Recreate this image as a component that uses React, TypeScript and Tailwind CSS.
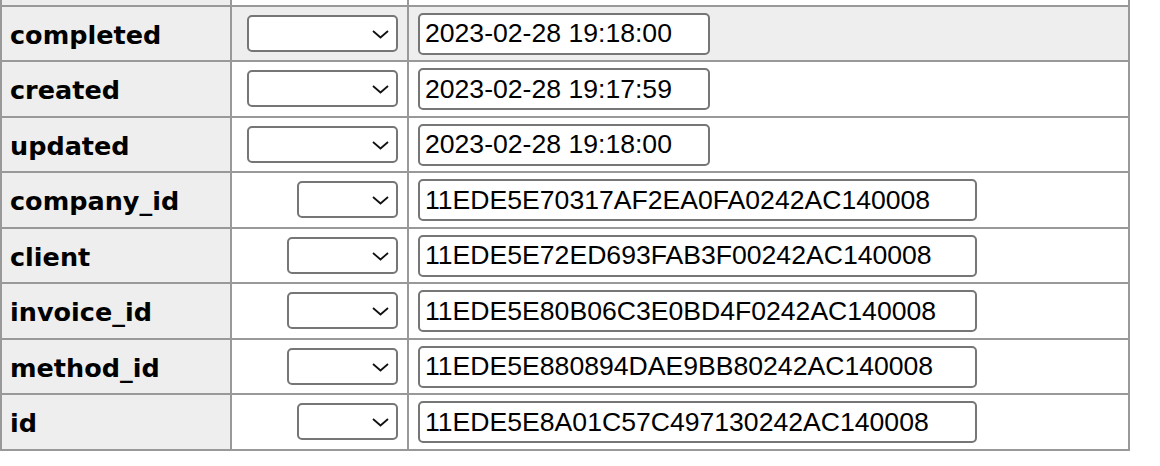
import React from 'react'

interface Field {
  name: string
  value: string
  selectWidth: string
  inputWidth: string
  rowHeight: string
  active?: boolean
}

const fields: Field[] = [
  { name: 'completed', value: '2023-02-28 19:18:00', selectWidth: 'w-[151px]', inputWidth: 'w-[292px]', rowHeight: 'h-[55px]', active: true },
  { name: 'created', value: '2023-02-28 19:17:59', selectWidth: 'w-[151px]', inputWidth: 'w-[292px]', rowHeight: 'h-[56px]' },
  { name: 'updated', value: '2023-02-28 19:18:00', selectWidth: 'w-[151px]', inputWidth: 'w-[292px]', rowHeight: 'h-[55px]' },
  { name: 'company_id', value: '11EDE5E70317AF2EA0FA0242AC140008', selectWidth: 'w-[101px]', inputWidth: 'w-[559px]', rowHeight: 'h-[56px]' },
  { name: 'client', value: '11EDE5E72ED693FAB3F00242AC140008', selectWidth: 'w-[111px]', inputWidth: 'w-[559px]', rowHeight: 'h-[55px]' },
  { name: 'invoice_id', value: '11EDE5E80B06C3E0BD4F0242AC140008', selectWidth: 'w-[111px]', inputWidth: 'w-[559px]', rowHeight: 'h-[56px]' },
  { name: 'method_id', value: '11EDE5E880894DAE9BB80242AC140008', selectWidth: 'w-[111px]', inputWidth: 'w-[559px]', rowHeight: 'h-[55px]' },
  { name: 'id', value: '11EDE5E8A01C57C497130242AC140008', selectWidth: 'w-[101px]', inputWidth: 'w-[559px]', rowHeight: 'h-[56px]' },
]

function FunctionSelect({ width }: { width: string }) {
  return (
    <div className={`relative h-[37px] ${width} rounded-[5px] border-2 border-[#767676] bg-white`}>
      <svg
        className="absolute right-[7px] top-[13px]"
        width="17"
        height="9"
        viewBox="0 0 17 9"
        fill="none"
      >
        <polyline points="1,1 8.5,7.5 16,1" stroke="#111" strokeWidth="1.8" />
      </svg>
    </div>
  )
}

export default function App() {
  return (
    <div className="w-[1160px] h-[466px] bg-white font-['Verdana','DejaVu_Sans',sans-serif]">
      <div className="w-[1130px]">
        {/* resto da linha anterior */}
        <div className="flex h-[5px]">
          <div className="w-[232px] border-x-2 border-[#999] bg-[#eeeeee]" />
          <div className="w-[177px] border-r-2 border-[#999]" />
          <div className="w-[721px] border-r-2 border-[#999]" />
        </div>

        {fields.map((f) => (
          <div key={f.name} className={`flex ${f.rowHeight} border-t-2 border-[#999]`}>
            <div className="flex w-[232px] items-center border-x-2 border-[#999] bg-[#eeeeee] pl-[8px] pt-[3px] text-[25.5px] font-bold text-black">
              {f.name}
            </div>
            <div
              className={`flex w-[177px] items-center justify-end border-r-2 border-[#999] pr-[9px] pb-[1px] ${
                f.active ? 'bg-[#eeeeee]' : 'bg-white'
              }`}
            >
              <FunctionSelect width={f.selectWidth} />
            </div>
            <div
              className={`flex w-[721px] items-center border-r-2 border-[#999] pl-[9px] ${
                f.active ? 'bg-[#eeeeee]' : 'bg-white'
              }`}
            >
              <input
                readOnly
                value={f.value}
                className={`h-[42px] ${f.inputWidth} rounded-[5px] border-2 border-[#767676] bg-white px-[5px] font-['Liberation_Sans','Arial',sans-serif] text-[26.6px] text-black outline-none`}
              />
            </div>
          </div>
        ))}
        <div className="h-[2px] border-t-2 border-[#999]" />
      </div>
    </div>
  )
}
